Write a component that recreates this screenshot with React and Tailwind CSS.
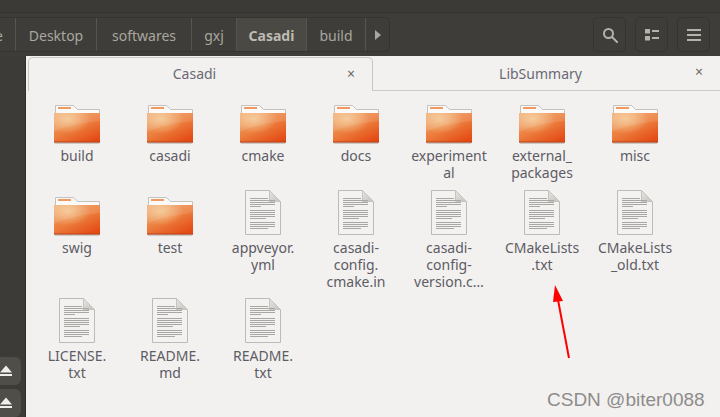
import { useId } from 'react'

const files = [
  { name: 'build', type: 'folder' },
  { name: 'casadi', type: 'folder' },
  { name: 'cmake', type: 'folder' },
  { name: 'docs', type: 'folder' },
  { name: ['experiment', 'al'], type: 'folder' },
  { name: ['external_', 'packages'], type: 'folder' },
  { name: 'misc', type: 'folder' },
  { name: 'swig', type: 'folder' },
  { name: 'test', type: 'folder' },
  { name: ['appveyor.', 'yml'], type: 'doc' },
  { name: ['casadi-', 'config.', 'cmake.in'], type: 'doc' },
  { name: ['casadi-', 'config-', 'version.c…'], type: 'doc' },
  { name: ['CMakeLists', '.txt'], type: 'doc' },
  { name: ['CMakeLists', '_old.txt'], type: 'doc' },
  { name: ['LICENSE.', 'txt'], type: 'doc' },
  { name: ['README.', 'md'], type: 'doc' },
  { name: ['README.', 'txt'], type: 'doc' },
]

const crumbs = [
  { label: 'e', w: 'w-[16px] justify-end pr-[12px]' },
  { label: 'Desktop', w: 'w-[81px] justify-center' },
  { label: 'softwares', w: 'w-[95px] justify-center' },
  { label: 'gxj', w: 'w-[45px] justify-center' },
  { label: 'Casadi', w: 'w-[70px] justify-center', active: true },
  { label: 'build', w: 'w-[59px] justify-center' },
]

function FolderIcon() {
  const id = useId()
  const glowId = id + 'g'
  return (
    <svg width="46" height="39" viewBox="0 0 46 39">
      <defs>
        <linearGradient id={id} x1="0.1" y1="0" x2="0.8" y2="1">
          <stop offset="0" stopColor="#f0a468" />
          <stop offset="0.5" stopColor="#ec7f3f" />
          <stop offset="1" stopColor="#e44a14" />
        </linearGradient>
        <radialGradient id={glowId} cx="0.3" cy="0.2" r="0.5">
          <stop offset="0" stopColor="#f6d6a4" stopOpacity="0.75" />
          <stop offset="1" stopColor="#f6d6a4" stopOpacity="0" />
        </radialGradient>
      </defs>
      <path d="M1.500 0.500h18l4 4h22v4h-44z" fill="#fbfaf8" stroke="#c4c2bc" />
      <rect x="4" y="2" width="13" height="2" fill="#f09a62" />
      <rect x="0" y="8" width="46" height="29.500" fill={`url(#${id})`} />
      <rect x="0" y="8" width="46" height="29.500" fill={`url(#${glowId})`} />
      <path d="M0 8h46v8C30 18 14 20 0 27z" fill="#fff" fillOpacity="0.1" />
      <path d="M0 37h46" stroke="#b53d14" strokeWidth="1" />
      <rect x="1" y="37.500" width="44" height="1.500" fill="#a3a09b" fillOpacity="0.5" />
    </svg>
  )
}

const docLines = [
  [8, 18], [10, 25], [12, 25], [14, 25], [16, 11],
  [20, 25], [22, 25], [24, 25], [26, 25], [28, 16],
  [32, 25], [34, 25], [36, 25], [38, 18],
]

function DocIcon() {
  const id = useId()
  return (
    <svg width="36" height="46" viewBox="0 0 36 46">
      <defs>
        <linearGradient id={id} x1="0" y1="0" x2="1" y2="1">
          <stop offset="0" stopColor="#e6e5e2" />
          <stop offset="1" stopColor="#c4c2be" />
        </linearGradient>
      </defs>
      <path d="M0.500 0.500h24l11 11v33h-35z" fill="#f3f2f0" stroke="#bdbbb6" />
      <path d="M24.500 0.500v11h11z" fill={`url(#${id})`} stroke="#c6c4bf" />
      {docLines.map(([y, w], i) => (
        <rect key={i} x="5" y={y} width={w} height="1" fill="#a8a7a4" />
      ))}
    </svg>
  )
}

function FileItem({ file }) {
  const lines = Array.isArray(file.name) ? file.name : [file.name]
  return (
    <div className="flex flex-col items-center">
      <div className="h-[46px] flex items-end">
        {file.type === 'folder' ? <FolderIcon /> : <DocIcon />}
      </div>
      <div className="mt-[3px] text-center text-[14px] leading-[17px] text-[#5e5c64]">
        {lines.map((l) => <div key={l}>{l}</div>)}
      </div>
    </div>
  )
}

function ToolButton({ children }) {
  return (
    <button className="w-[33px] h-[35px] rounded-[5px] border border-[#353430] bg-[#3e3d39] flex items-center justify-center">
      {children}
    </button>
  )
}

function EjectButton() {
  return (
    <div className="w-[21px] h-[28px] rounded-r-[6px] bg-[#4f4e49] flex items-center">
      <svg width="13" height="12" viewBox="0 0 13 12">
        <path d="M6 0.500L12 7.500H0z" fill="#eeeeec" />
        <rect x="0" y="9" width="12" height="2" fill="#eeeeec" />
      </svg>
    </div>
  )
}

function Tab({ title, active }) {
  return (
    <div className={`relative flex items-center justify-center pr-[12px] text-[14px] text-[#6a6973] ${active ? 'w-[345px] h-[34px] ml-[2px] mt-[1px] pb-[2px] bg-[#f2f1f0] rounded-t-[5px] border border-b-0 border-[#c8c6c2]' : 'h-[35px] flex-1 border-b border-[#cdcbc7]'}`}>
      {title}
      <span className="absolute top-[9px] right-[17px] text-[14px] leading-[14px] text-[#6b6a68]">×</span>
    </div>
  )
}

export default function App() {
  return (
    <div className="w-[720px] h-[417px] overflow-hidden relative flex flex-col bg-[#3c3b37] font-['Noto_Sans',sans-serif]">
      {/* header */}
      <div className="h-[13px] border-b border-[#35342f] bg-[#3b3a36]" />
      <div className="h-[43px] flex items-start pt-[4px] pr-[10px] bg-[#3e3d39]">
        <div className="h-[35px] flex items-center border border-l-0 border-[#353430] rounded-r-[5px] text-[14px] text-[#a9a79f]">
          {crumbs.map((c) => (
            <div
              key={c.label}
              className={`h-full flex items-center pt-[1px] border-r border-[#55544e] ${c.w} ${c.active ? 'bg-[#4a4943] font-bold text-[#bdbbb4]' : ''}`}
            >
              {c.label}
            </div>
          ))}
          <div className="w-[23px] h-full flex items-center justify-center">
            <svg width="6" height="10" viewBox="0 0 6 10"><path d="M0 0l6 5-6 5z" fill="#a9a79f" /></svg>
          </div>
        </div>
        <div className="ml-auto flex gap-[9px]">
          <ToolButton>
            <svg width="16" height="16" viewBox="0 0 16 16" fill="none" stroke="#b4b2aa" strokeWidth="2">
              <circle cx="6.500" cy="6.500" r="4.500" />
              <path d="M10 10l5 5" strokeLinecap="round" />
            </svg>
          </ToolButton>
          <ToolButton>
            <svg width="14" height="12" viewBox="0 0 14 12" fill="#b4b2aa">
              <rect x="0" y="0" width="5" height="4.500" />
              <rect x="0" y="7" width="5" height="4.500" />
              <rect x="7" y="1" width="7" height="2" />
              <rect x="7" y="8" width="7" height="2" />
            </svg>
          </ToolButton>
          <ToolButton>
            <svg width="14" height="12" viewBox="0 0 14 12" fill="#b4b2aa">
              <rect y="0" width="14" height="2" />
              <rect y="5" width="14" height="2" />
              <rect y="10" width="14" height="2" />
            </svg>
          </ToolButton>
        </div>
      </div>

      {/* body */}
      <div className="flex-1 flex min-h-0">
        <div className="w-[25px] flex flex-col justify-end gap-[4px] bg-[#3c3b37]">
          <EjectButton />
          <EjectButton />
        </div>
        <div className="flex-1 bg-[#f2f1f0] border-l border-[#2f2e2b]">
          <div className="flex items-start">
            <Tab title="Casadi" active />
            <Tab title="LibSummary" />
          </div>
          <div className="grid grid-cols-[repeat(7,93px)] grid-rows-[92px_108px_auto] pl-[4.5px] pt-[7px]">
            {files.map((f) => <FileItem key={f.type + f.name} file={f} />)}
          </div>
        </div>
      </div>

      {/* annotation + watermark */}
      <svg className="absolute left-[545px] top-[280px]" width="34" height="84" viewBox="0 0 34 84">
        <path d="M24 78L13 20" stroke="#ff0000" strokeWidth="2" />
        <path d="M10 5L18 21L8 22z" fill="#ff0000" />
      </svg>
      <div className="absolute left-[547px] top-[388px] text-[19px] leading-[24px] text-[#8d8c8b] font-['Liberation_Sans',sans-serif]">CSDN @biter0088</div>
    </div>
  )
}
